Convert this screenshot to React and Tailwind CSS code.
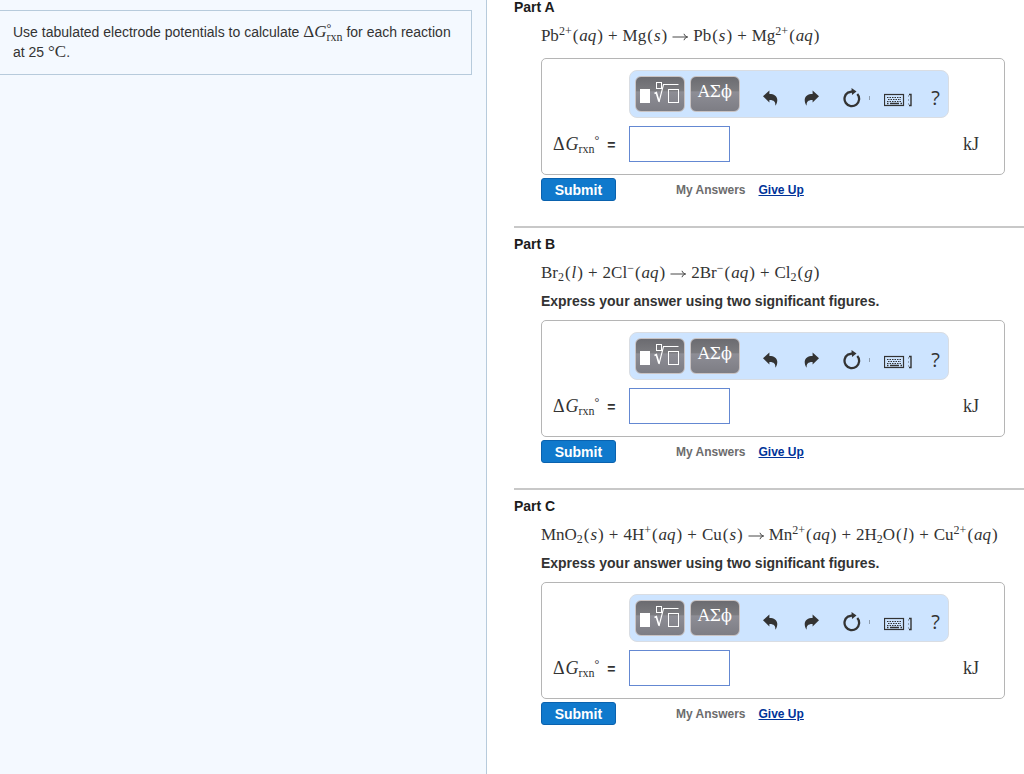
const Sup = ({ children }) => <sup className="text-[12px]">{children}</sup>;

const Sub = ({ children }) => <sub className="text-[12px]">{children}</sub>;

const Op = ({ children }) => <span className="mx-[5px]">{children}</span>;

// State of matter, e.g. (aq)
const State = ({ children }) => (
  <span className="ml-px">
    (<i className="mx-px">{children}</i>)
  </span>
);

const Arrow = () => (
  <svg role="img" aria-label="yields" className="inline-block w-4 h-2 mx-[5px]" viewBox="0 0 16 8" fill="none" stroke="currentColor" strokeWidth="0.9">
    <path d="M0.5 4h15M12 0.8c0.6 1.8 1.8 2.8 3.5 3.2c-1.7 0.4-2.9 1.4-3.5 3.2" />
  </svg>
);

const TemplateIcon = () => (
  <svg className="w-[39px] h-[24px] shrink-0" viewBox="0 0 39 24" fill="none" stroke="#fff">
    <rect x="0" y="7" width="10" height="14" fill="#fff" stroke="none" />
    <rect x="16.5" y="0.5" width="5" height="6" strokeWidth="1" />
    <path d="M14.5 11.5l1.8-0.9L19 19.5" strokeWidth="1.7" />
    <path d="M19 20L23.5 2.5H38.5" strokeWidth="1.1" />
    <rect x="28.5" y="7.5" width="10" height="13" strokeWidth="1" />
  </svg>
);

const UndoIcon = () => (
  <svg className="w-[15px] h-[16px]" viewBox="0 0 15 16" fill="#333">
    <path d="M0 6.2L6.4 0.5V4c4.6 0 7.6 2 7.9 5.7c0.1 2.2-0.7 4.2-2 6.1c0.4-3.7-1.3-5.8-5.9-5.7V12.5z" />
  </svg>
);

const RedoIcon = () => (
  <svg className="w-[15px] h-[16px]" viewBox="0 0 15 16" fill="#333">
    <path d="M15 6.2L8.6 0.5V4C4 4 1 6 0.7 9.7c-0.1 2.2 0.7 4.2 2 6.1c-0.4-3.7 1.3-5.8 5.9-5.7V12.5z" />
  </svg>
);

const ResetIcon = () => (
  <svg className="w-[18px] h-[20px]" viewBox="0 0 18 20" fill="none">
    <path d="M14.3 6A7.3 7.3 0 1 1 5 4.6L9.5 3.4" stroke="#333" strokeWidth="2.3" />
    <path d="M8.5 0L13.5 3.4L9 7z" fill="#333" />
  </svg>
);

const KeyboardIcon = () => (
  <svg className="w-[28px] h-[14px]" viewBox="0 0 28 14" fill="none" stroke="#333">
    <rect x="0.5" y="1.5" width="19" height="11" strokeWidth="1.2" />
    <path d="M3 4.5h15M4 6.5h13M3 8.5h15" strokeWidth="1" strokeDasharray="1.5 1" />
    <path d="M6 10.5h9M3 10.5h1.5M16.5 10.5h1.5" strokeWidth="1.3" />
    <path d="M24.5 2v2M24.5 6v2M24.5 10v2" strokeWidth="0.7" opacity="0.5" />
    <path d="M25 1.5h2v11h-2" strokeWidth="1.4" />
  </svg>
);

const toolButton =
  "flex items-center justify-center w-[50px] h-9 rounded-md border border-[#c9c3c3] bg-[linear-gradient(#6b6b70_0%,#7c7c80_42%,#8e8e96_43%,#7d7d84_100%)] text-white";

const Toolbar = () => (
  <div className="flex items-center h-12 pl-[5px] pr-2 rounded-lg border border-[#d9dde3] bg-[#cde4ff] text-[#333]">
    <button type="button" aria-label="Templates" className={toolButton}>
      <TemplateIcon />
    </button>
    <button type="button" aria-label="Symbols" className={`${toolButton} ml-[5px] pb-1 font-['DejaVu_Serif',serif] text-[16px]`}>
      ΑΣϕ
    </button>
    <div className="flex flex-1 items-center pt-2 pl-[23px]">
      <button type="button" aria-label="Undo"><UndoIcon /></button>
      <button type="button" aria-label="Redo" className="ml-[26px]"><RedoIcon /></button>
      <button type="button" aria-label="Reset" className="ml-6"><ResetIcon /></button>
      <span className="w-px h-1 ml-2 bg-[#8d9db0]" />
      <button type="button" aria-label="Keyboard shortcuts" className="ml-[14px] pt-1"><KeyboardIcon /></button>
      <button type="button" aria-label="Help" className="ml-auto font-['Open_Sans',sans-serif] text-[20px] leading-5">?</button>
    </div>
  </div>
);

const AnswerBox = ({ id }) => (
  <div className="grid grid-cols-[87px_320px_1fr] items-center gap-y-2 pt-[11px] pb-3 rounded-[5px] border border-[#b5b5b5]">
    <div className="col-start-2">
      <Toolbar />
    </div>
    <label htmlFor={`answer-${id}`} className="col-start-1 pl-[11px] whitespace-nowrap font-['Liberation_Serif',serif] text-[18px]">
      Δ<i className="ml-px">G</i><Sub>rxn</Sub><Sup>°</Sup>
      <span className="ml-2 font-bold font-['Liberation_Sans',sans-serif] text-[14px]">=</span>
    </label>
    <input id={`answer-${id}`} type="text" className="w-[101px] h-9 px-2 border border-[#6488d2] bg-white outline-none" />
    <span className="pl-[14px] font-['Liberation_Serif',serif] text-[18px]">kJ</span>
  </div>
);

const Part = ({ id, equation, hint }) => (
  <section className="border-b-2 border-[#c8c8c8] last:border-b-0 pt-[9px] pb-[25px] first:pt-0">
    <h2 className="text-[14px] leading-[14px] font-bold text-[#1c1c1c]">Part {id}</h2>
    <div className="pl-[27px] pr-[19px]">
      <p className="my-2 h-7 leading-7 text-[17px] whitespace-nowrap font-['Liberation_Serif',serif]">{equation}</p>
      {hint && <p className="-mt-1 mb-[9px] text-[14px] leading-5 font-bold">{hint}</p>}
      <AnswerBox id={id} />
      <div className="flex items-center mt-[3px] text-[12px] font-bold">
        <button type="button" className="w-[75px] h-[23px] rounded-[3px] border border-[#0a62ae] bg-[#1079cc] text-[14px] leading-5 font-bold text-white">
          Submit
        </button>
        <span className="ml-[60px] text-[#6c6c6c]">My Answers</span>
        <a href="#give-up" className="ml-[13px] text-[#003399] underline">Give Up</a>
      </div>
    </div>
  </section>
);

const hint = "Express your answer using two significant figures.";

const parts = [
  {
    id: "A",
    equation: (
      <>
        Pb<Sup>2+</Sup><State>aq</State><Op>+</Op>Mg<State>s</State><Arrow />
        Pb<State>s</State><Op>+</Op>Mg<Sup>2+</Sup><State>aq</State>
      </>
    ),
  },
  {
    id: "B",
    hint,
    equation: (
      <>
        Br<Sub>2</Sub><State>l</State><Op>+</Op>2Cl<Sup>−</Sup><State>aq</State><Arrow />
        2Br<Sup>−</Sup><State>aq</State><Op>+</Op>Cl<Sub>2</Sub><State>g</State>
      </>
    ),
  },
  {
    id: "C",
    hint,
    equation: (
      <>
        MnO<Sub>2</Sub><State>s</State><Op>+</Op>4H<Sup>+</Sup><State>aq</State><Op>+</Op>Cu<State>s</State><Arrow />
        Mn<Sup>2+</Sup><State>aq</State><Op>+</Op>2H<Sub>2</Sub>O<State>l</State><Op>+</Op>Cu<Sup>2+</Sup><State>aq</State>
      </>
    ),
  },
];

export default function App() {
  return (
    <div className="flex min-h-screen bg-white font-['Liberation_Sans',Arial,sans-serif] text-[#333]">
      {/* Question */}
      <aside className="w-[47.55%] shrink-0 pt-[10px] pr-[14px] border-r border-[#b7cbdc] bg-[#f4f9ff]">
        <div className="pl-[13px] pr-5 pt-[11px] pb-3 border border-l-0 border-[#b7cbdc] text-[14px] leading-[19px]">
          Use tabulated electrode potentials to calculate{" "}
          <span className="whitespace-nowrap font-['Liberation_Serif',serif] text-[17px] leading-[19px]">
            Δ<i>G</i>
            <span className="inline-flex flex-col align-middle text-[12px] leading-[9px]">
              <span>°</span>
              <span>rxn</span>
            </span>
          </span>{" "}
          for each reaction at 25 <span className="font-['Liberation_Serif',serif] text-[17px] leading-[19px]">°C</span>.
        </div>
      </aside>

      {/* Parts */}
      <main className="flex-1 min-w-0 pl-[27px]">
        {parts.map(part => (
          <Part key={part.id} {...part} />
        ))}
      </main>
    </div>
  );
}
